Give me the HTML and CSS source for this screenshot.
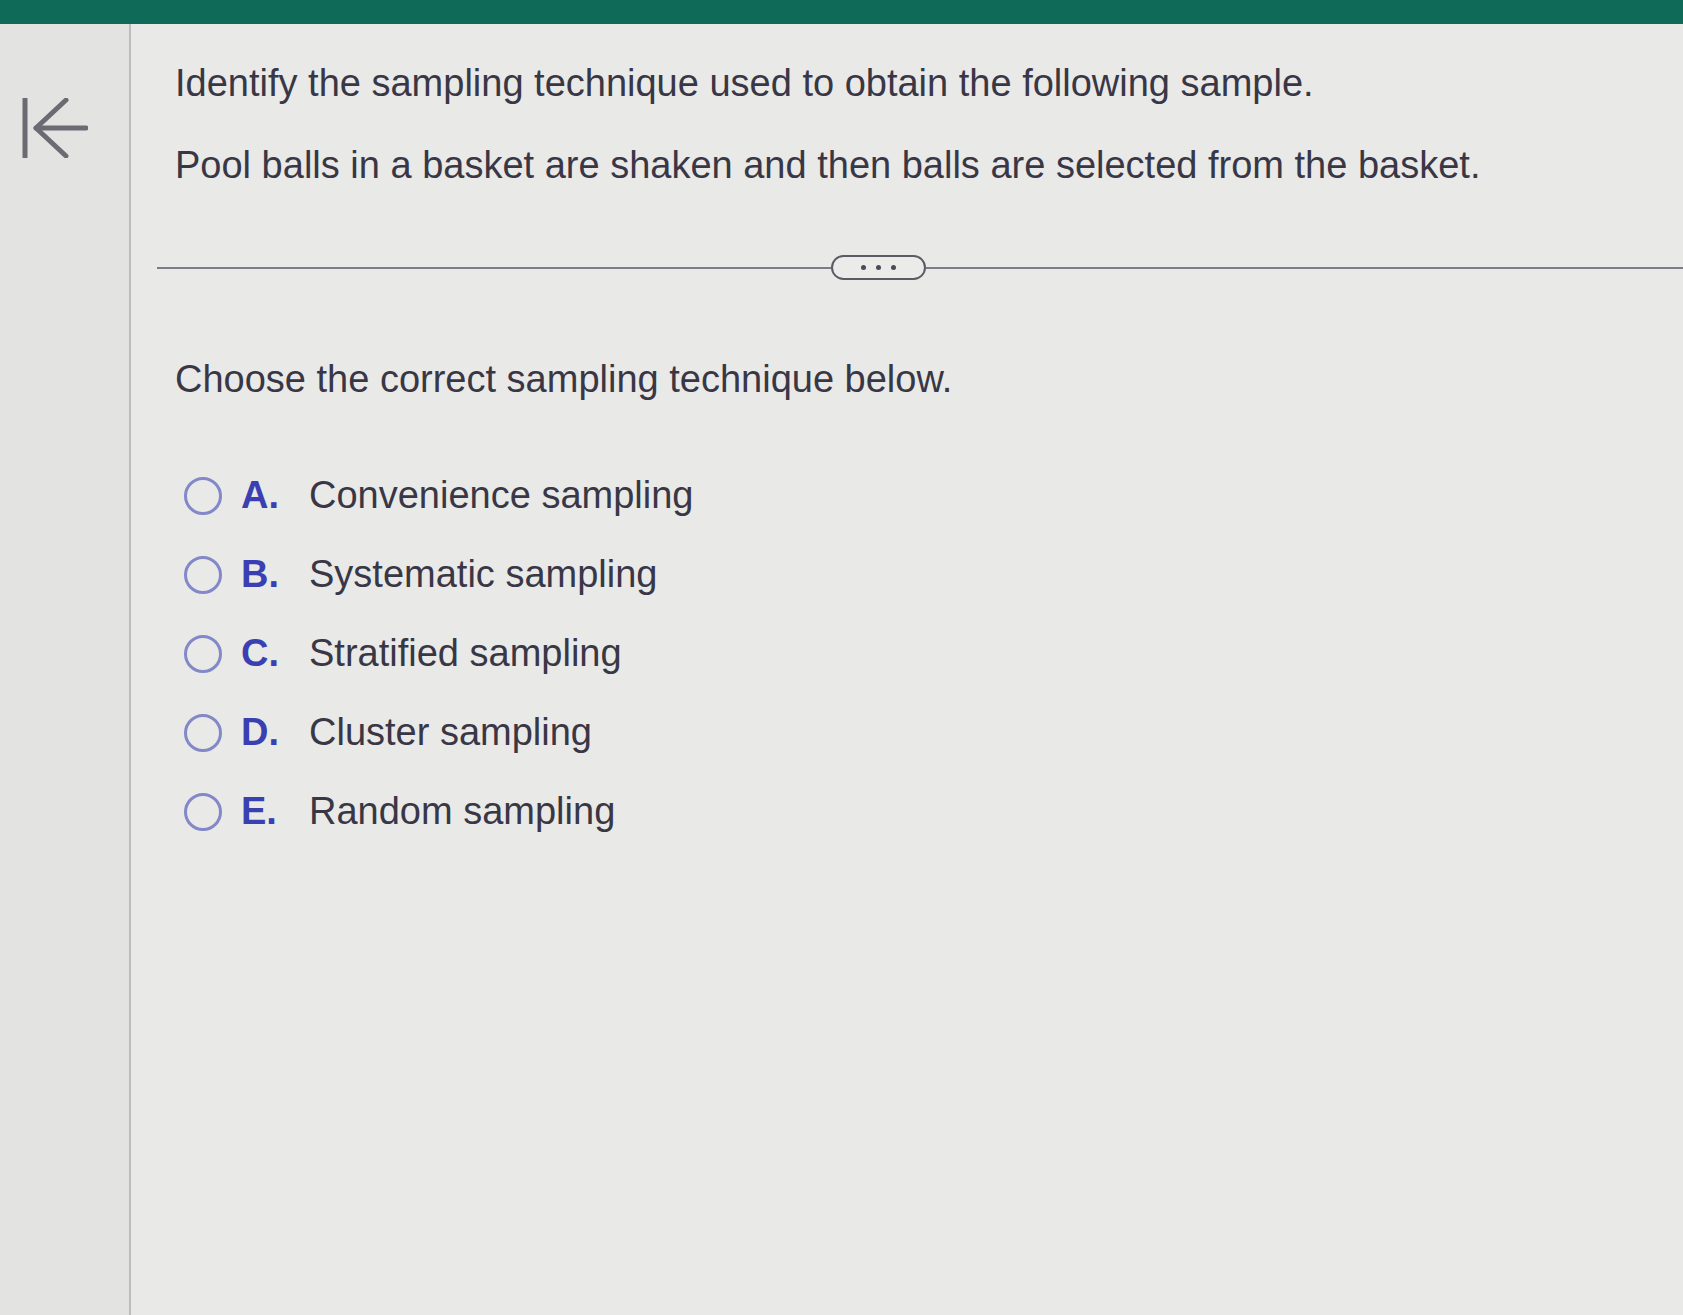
FILE: index.html
```html
<!DOCTYPE html>
<html lang="en">
<head>
<meta charset="utf-8">
<title>Sampling technique</title>
<link rel="stylesheet" href="styles.css">
</head>
<body>
<div class="topbar"></div>
<div class="frame">
  <aside class="sidebar">
    <svg class="collapse-icon" width="66" height="60" viewBox="0 0 66 60" aria-hidden="true">
      <line x1="3" y1="1" x2="3" y2="59" stroke="#6b6b73" stroke-width="5" stroke-linecap="round"/>
      <polyline points="44,2 14,30 44,58" fill="none" stroke="#6b6b73" stroke-width="5" stroke-linecap="round" stroke-linejoin="round"/>
      <line x1="14" y1="30" x2="64" y2="30" stroke="#6b6b73" stroke-width="5" stroke-linecap="round"/>
    </svg>
  </aside>
  <main class="content">
    <p class="question">Identify the sampling technique used to obtain the following sample.</p>
    <p class="question second">Pool balls in a basket are shaken and then balls are selected from the basket.</p>

    <div class="separator">
      <span class="sep-line sep-left"></span>
      <span class="more-pill"><i></i><i></i><i></i></span>
      <span class="sep-line sep-right"></span>
    </div>

    <p class="prompt">Choose the correct sampling technique below.</p>

    <ul class="options">
      <li class="option"><span class="radio"></span><span class="letter">A.</span><span class="label">Convenience sampling</span></li>
      <li class="option"><span class="radio"></span><span class="letter">B.</span><span class="label">Systematic sampling</span></li>
      <li class="option"><span class="radio"></span><span class="letter">C.</span><span class="label">Stratified sampling</span></li>
      <li class="option"><span class="radio"></span><span class="letter">D.</span><span class="label">Cluster sampling</span></li>
      <li class="option"><span class="radio"></span><span class="letter">E.</span><span class="label">Random sampling</span></li>
    </ul>
  </main>
</div>
</body>
</html>
```

FILE: styles.css
```css
html, body {
  margin: 0;
  padding: 0;
  height: 100%;
}

body {
  background: #e8e8e6;
  font-family: "Liberation Sans", Arial, sans-serif;
  color: #393746;
  overflow: hidden;
}

.topbar {
  height: 24px;
  background: #0f6a58;
}

.frame {
  display: flex;
  height: calc(100vh - 24px);
}

.sidebar {
  width: 131px;
  flex: 0 0 131px;
  background: #e3e3e1;
  border-right: 2px solid #bcbcbf;
  padding: 74px 0 0 22px;
  box-sizing: border-box;
}

.collapse-icon {
  display: block;
}

.content {
  flex: 1;
  padding: 37px 0 0 44px;
  background: #e9e9e7;
}

.question {
  margin: 0;
  font-size: 38px;
  line-height: 44px;
}

.question.second {
  margin-top: 38px;
}

.separator {
  display: flex;
  align-items: center;
  margin: 68px 0 0 -18px;
  height: 25px;
}

.sep-line {
  height: 2px;
  background: #7b7c8a;
}

.sep-left {
  width: 674px;
  flex: 0 0 674px;
}

.sep-right {
  flex: 1;
}

.more-pill {
  width: 95px;
  height: 25px;
  box-sizing: border-box;
  border: 2px solid #5b5b63;
  border-radius: 13px;
  display: flex;
  align-items: center;
  justify-content: center;
  gap: 10px;
  background: #ebebea;
}

.more-pill i {
  display: block;
  width: 5px;
  height: 5px;
  border-radius: 50%;
  background: #4b4b55;
}

.prompt {
  margin: 77px 0 0;
  font-size: 38px;
  line-height: 44px;
}

.options {
  list-style: none;
  margin: 55px 0 0;
  padding: 0;
}

.option {
  display: flex;
  align-items: center;
  height: 79px;
  font-size: 38px;
}

.radio {
  width: 38px;
  height: 38px;
  box-sizing: border-box;
  border: 3.5px solid #8388c8;
  border-radius: 50%;
  margin-left: 9px;
  flex: 0 0 38px;
}

.letter {
  margin-left: 19px;
  width: 68px;
  color: #3a3fb2;
  font-weight: bold;
}

.label {
  color: #393746;
}
```
